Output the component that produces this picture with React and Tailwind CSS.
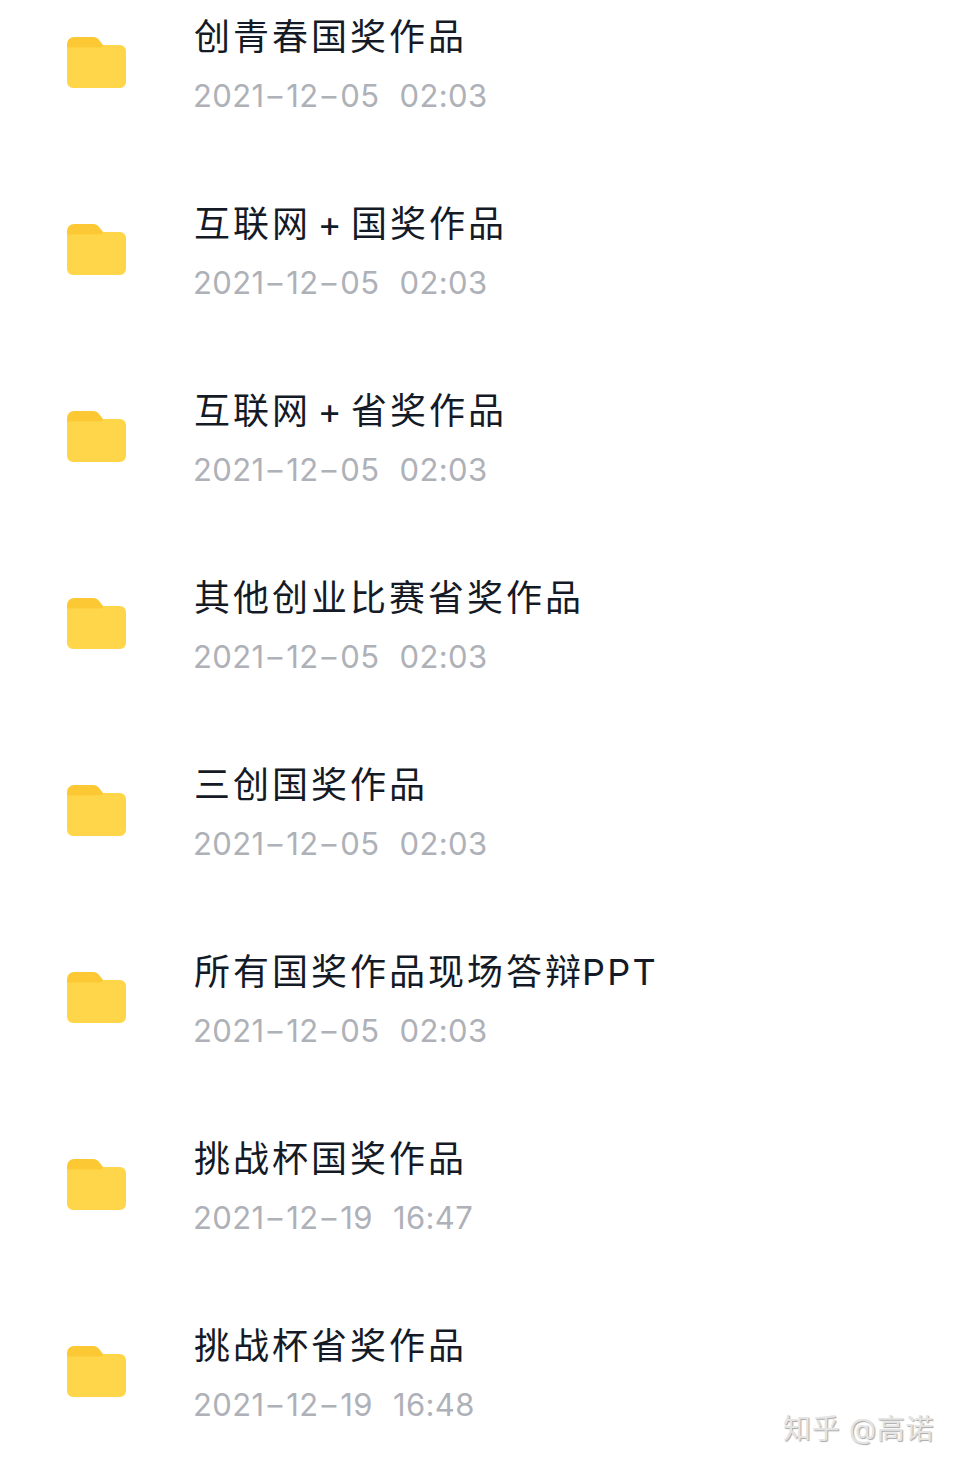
const FILES = [
  { name: '创青春国奖作品', day: '2021-12-05', time: '02:03' },
  { name: '互联网 + 国奖作品', day: '2021-12-05', time: '02:03' },
  { name: '互联网 + 省奖作品', day: '2021-12-05', time: '02:03' },
  { name: '其他创业比赛省奖作品', day: '2021-12-05', time: '02:03' },
  { name: '三创国奖作品', day: '2021-12-05', time: '02:03' },
  { name: '所有国奖作品现场答辩', suffix: 'PPT', day: '2021-12-05', time: '02:03' },
  { name: '挑战杯国奖作品', day: '2021-12-19', time: '16:47' },
  { name: '挑战杯省奖作品', day: '2021-12-19', time: '16:48' },
]

function FolderIcon() {
  return (
    <svg width="59" height="51" viewBox="0 0 59 51" className="shrink-0">
      <path d="M0 11V7a7 7 0 0 1 7-7h19c3 0 5 1.500 6.500 3.500L36 8v3z" fill="#fcc834" />
      <path d="M0 10.500h33c1.500 0 2.500-.5 3-2.500h17a6 6 0 0 1 6 6v31a6 6 0 0 1-6 6H6a6 6 0 0 1-6-6z" fill="#ffd54a" />
    </svg>
  )
}

// the dashes in the date run wider than the font's hyphen
function DateText({ value }) {
  const parts = value.split('-')
  return (
    <span>
      {parts.map((p, i) => (
        <span key={i}>
          {i > 0 && <span className="inline-block mx-[3.500px] scale-x-150">-</span>}
          {p}
        </span>
      ))}
    </span>
  )
}

export default function App() {
  return (
    <div className="relative h-[1468px] bg-white overflow-hidden font-['Inter','Noto_Sans_CJK_SC',sans-serif]">
      <ul className="flex flex-col">
        {FILES.map((f) => (
          <li key={f.name} className="flex h-[187px] pl-[67px] pt-[37px] gap-[68px]">
            <FolderIcon />
            <div className="-mt-[37px] pt-[14px]">
              <div className="h-[46px] text-[36px] leading-[46px] tracking-[3px] [word-spacing:-6.500px] text-[#141a26] whitespace-pre">
                {f.name}
                {f.suffix && <span className="-ml-[2px] tracking-[2.200px]">{f.suffix}</span>}
              </div>
              <div className="mt-[13px] -ml-[1px] flex gap-[20px] text-[31px] leading-[46px] tracking-[0.4px] text-[#aeb1b8]">
                <DateText value={f.day} />
                <span>{f.time}</span>
              </div>
            </div>
          </li>
        ))}
      </ul>
      <div className="absolute left-[783px] top-[1410px] text-[28px] leading-[38px] tracking-[0.7px] text-[#e4e4e4] [text-shadow:1px_1px_1px_#a8a8a8] whitespace-pre">知乎 @高诺</div>
    </div>
  )
}
